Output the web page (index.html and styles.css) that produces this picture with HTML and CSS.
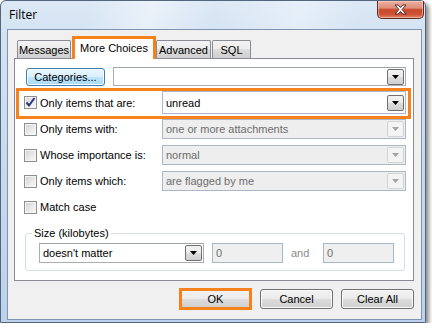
FILE: index.html
```html
<!DOCTYPE html>
<html lang="en">
<head>
  <meta charset="UTF-8" />
  <title>Filter</title>
  <link rel="stylesheet" href="styles.css">
</head>
<body>

  <!-- Dialog window -->
  <div class="window">
    <div class="titlebar">
      <span class="title">Filter</span>
      <div class="close">
        <svg width="13" height="11" viewBox="0 0 13 11">
          <path d="M1 1h3.2l2.3 2.6L8.8 1H12L8.1 5.5 12 10H8.8L6.5 7.4 4.2 10H1l3.9-4.5z" fill="#fff" stroke="#4a2a22" stroke-width="1" stroke-linejoin="round"/>
        </svg>
      </div>
    </div>

    <div class="client">
      <div class="tabs">
        <div class="tab tab-first">Messages</div>
        <div class="tab tab-active">More Choices</div>
        <div class="tab tab-adv">Advanced</div>
        <div class="tab tab-sql">SQL</div>
      </div>

      <div class="panel">
        <div class="row row-cat">
          <div class="btn btn-hot btn-cat">Categories...</div>
          <div class="combo combo-cat">
            <span class="value"></span>
            <span class="drop"><svg width="7" height="4" viewBox="0 0 7 4"><path d="M0 0h7L3.5 4z" fill="#000"/></svg></span>
          </div>
        </div>

        <div class="row row-hl">
          <div class="check">
            <span class="box">
              <svg width="11" height="11" viewBox="0 0 11 11"><path d="M1.5 5.5l2.5 3 5.5-7.5" fill="none" stroke="#27367a" stroke-width="2"/></svg>
            </span>
            <span>Only items that are:</span>
          </div>
          <div class="combo combo-tall">
            <span class="value">unread</span>
            <span class="drop"><svg width="7" height="4" viewBox="0 0 7 4"><path d="M0 0h7L3.5 4z" fill="#000"/></svg></span>
          </div>
        </div>

        <div class="row">
          <div class="check"><span class="box"></span><span>Only items with:</span></div>
          <div class="combo combo-off">
            <span class="value">one or more attachments</span>
            <span class="drop"><svg width="7" height="4" viewBox="0 0 7 4"><path d="M0 0h7L3.5 4z" fill="#a3a3a3"/></svg></span>
          </div>
        </div>

        <div class="row row-gap">
          <div class="check"><span class="box"></span><span>Whose importance is:</span></div>
          <div class="combo combo-off">
            <span class="value">normal</span>
            <span class="drop"><svg width="7" height="4" viewBox="0 0 7 4"><path d="M0 0h7L3.5 4z" fill="#a3a3a3"/></svg></span>
          </div>
        </div>

        <div class="row row-gap">
          <div class="check"><span class="box"></span><span>Only items which:</span></div>
          <div class="combo combo-off">
            <span class="value">are flagged by me</span>
            <span class="drop"><svg width="7" height="4" viewBox="0 0 7 4"><path d="M0 0h7L3.5 4z" fill="#a3a3a3"/></svg></span>
          </div>
        </div>

        <div class="row row-gap">
          <div class="check"><span class="box"></span><span>Match case</span></div>
        </div>

        <fieldset class="group">
          <legend>Size (kilobytes)</legend>
          <div class="size-row">
            <div class="combo combo-size">
              <span class="value">doesn't matter</span>
              <span class="drop"><svg width="7" height="4" viewBox="0 0 7 4"><path d="M0 0h7L3.5 4z" fill="#000"/></svg></span>
            </div>
            <div class="textbox">0</div>
            <span class="and">and</span>
            <div class="textbox">0</div>
          </div>
        </fieldset>
      </div>

      <div class="actions">
        <div class="btn btn-ok">OK</div>
        <div class="btn">Cancel</div>
        <div class="btn">Clear All</div>
      </div>
    </div>
  </div>

</body>
</html>
```

FILE: styles.css
```css
body, html {
  margin: 0; padding: 0;
  background: #fff;
  font-family: 'Liberation Sans', Arial, sans-serif;
  font-size: 11px;
  color: #000;
  overflow: hidden;
}

/* Window frame */
.window {
  width: 426px;
  height: 323px;
  box-sizing: border-box;
  border: 1px solid #55667c;
  border-radius: 6px 6px 0 0;
  background: linear-gradient(180deg, #dce8f5 0%, #d2e2f3 12%, #c5d8ee 60%, #bcd2ec 100%);
  box-shadow: 3px 3px 4px rgba(0, 0, 0, 0.45);
  display: flex;
  flex-direction: column;
}
.titlebar {
  height: 28px;
  display: flex;
  justify-content: space-between;
  align-items: flex-start;
  padding-left: 8px;
  background: linear-gradient(100deg, rgba(255,255,255,0) 20%, rgba(255,255,255,0.45) 35%, rgba(255,255,255,0) 50%, rgba(255,255,255,0.35) 70%, rgba(255,255,255,0) 85%);
}
.title {
  font-family: 'Open Sans', 'Liberation Sans', sans-serif;
  font-size: 12px;
  line-height: 28px;
  color: #000;
}
.close {
  width: 47px;
  height: 18px;
  margin-right: 1px;
  box-sizing: border-box;
  border: 1px solid #5c2c20;
  border-top: none;
  border-radius: 0 0 5px 5px;
  background: linear-gradient(180deg, #eab0a2 0%, #e08f7b 40%, #c9472c 52%, #cf5437 80%, #e0866c 100%);
  display: flex;
  align-items: center;
  justify-content: center;
  box-shadow: inset 0 0 0 1px rgba(255, 220, 210, 0.5);
}

/* Client area */
.client {
  flex: 1;
  margin: 0 3px 2px 6px;
  border: 1px solid #8194ad;
  background: #f0f0f0;
  padding: 0 7px 0 6px;
}

/* Tabs */
.tabs {
  height: 28px;
  display: flex;
  align-items: flex-end;
  padding-left: 3px;
}
.tab {
  height: 18px;
  box-sizing: border-box;
  border: 1px solid #898c95;
  border-bottom: none;
  border-radius: 2px 2px 0 0;
  background: linear-gradient(180deg, #f3f3f3 0%, #ebebeb 50%, #dddddd 50%, #cfcfcf 100%);
  text-align: center;
  line-height: 18px;
}
.tab-first { width: 54px; }
.tab-active {
  width: 84px;
  height: 23px;
  margin-left: 1px;
  margin-bottom: -1px;
  border: 3px solid #f7821b;
  border-bottom: none;
  border-radius: 0;
  background: #fff;
  line-height: 18px;
  position: relative;
  z-index: 1;
}
.tab-adv { width: 55px; }
.tab-sql { width: 39px; margin-left: 1px; }

.panel {
  height: 223px;
  box-sizing: border-box;
  border: 1px solid #898c95;
  background: #fff;
  padding: 8px 6px 0 9px;
}

/* Rows */
.row {
  display: flex;
  align-items: center;
  height: 20px;
}
.row-gap { margin-top: 6px; }
.row-cat { height: 19px; }
.row-hl {
  height: auto;
  margin: 2px -4px 0 -8px;
  border: 3px solid #f7821b;
  padding: 0 2px 2px 5px;
}
.check {
  width: 138px;
  flex: none;
  display: flex;
  align-items: center;
}
.check span:last-child { margin-left: 3px; }
.box {
  width: 13px;
  height: 13px;
  box-sizing: border-box;
  border: 1px solid #8e8f8f;
  background: linear-gradient(135deg, #d6d6d6 0%, #f0f0f0 70%, #fbfbfb 100%);
  box-shadow: inset 0 0 0 1px #f4f4f4;
  display: flex;
  align-items: center;
  justify-content: center;
}
.box:empty { background: linear-gradient(135deg, #cfcfcf 0%, #ececec 60%, #f9f9f9 100%); }

/* Buttons */
.btn {
  width: 73px;
  height: 20px;
  box-sizing: border-box;
  border: 1px solid #707070;
  border-radius: 3px;
  background: linear-gradient(180deg, #f2f2f2 0%, #ebebeb 50%, #dddddd 50%, #cfcfcf 100%);
  box-shadow: inset 0 0 0 1px #fbfbfb;
  text-align: center;
  line-height: 18px;
  color: #000;
}
.btn-hot {
  border-color: #3c7fb1;
  background: linear-gradient(180deg, #eaf6fd 0%, #d9f0fc 50%, #bee6fd 50%, #a7d9f5 100%);
}
.btn-cat {
  width: 79px;
  height: 18px;
  line-height: 16px;
  margin: 1px 0 0 2px;
  flex: none;
}
.btn-ok {
  height: 22px;
  border: 3px solid #f7821b;
  border-radius: 0;
  box-shadow: none;
  line-height: 16px;
}

/* Combo boxes */
.combo {
  flex: 1;
  height: 20px;
  box-sizing: border-box;
  border: 1px solid #abadb3;
  border-top-color: #9ea3ad;
  background: #fff;
  display: flex;
  align-items: center;
  justify-content: space-between;
  padding: 0 1px 0 3px;
}
.combo-cat {
  height: 19px;
  margin-left: 8px;
  margin-right: 1px;
}
.combo-tall {
  height: 23px;
  border-color: #a7b8cf;
  margin-top: 0;
}
.combo-off {
  background: #eeeeee;
  border-color: #a9b7c9;
  color: #6d6d6d;
  margin-right: 1px;
}
.drop {
  width: 17px;
  height: 16px;
  box-sizing: border-box;
  border: 1px solid #707070;
  border-radius: 2px;
  background: linear-gradient(180deg, #f2f2f2 0%, #ebebeb 50%, #dddddd 50%, #cfcfcf 100%);
  display: flex;
  align-items: center;
  justify-content: center;
}
.combo-off .drop {
  border-color: #d2d2d2;
  background: #f4f4f4;
}

/* Size group */
.group {
  margin: 10px 2px 0 1px;
  padding: 3px 0 7px 13px;
  border: 1px solid #d5dfe5;
  border-radius: 3px;
}
.group legend {
  padding: 0 2px;
  margin-left: -7px;
  line-height: 13px;
}
.size-row {
  display: flex;
  align-items: center;
}
.combo-size {
  flex: none;
  width: 165px;
}
.textbox {
  width: 71px;
  height: 20px;
  box-sizing: border-box;
  border: 1px solid #a9b7c9;
  background: #efefef;
  color: #6d6d6d;
  padding-left: 3px;
  line-height: 18px;
  margin-left: 8px;
}
.and {
  color: #8a8a8a;
  margin-left: 8px;
  width: 24px;
}

/* Bottom buttons */
.actions {
  display: flex;
  justify-content: flex-end;
  align-items: center;
  gap: 8px;
  height: 20px;
  margin-top: 8px;
}
```
